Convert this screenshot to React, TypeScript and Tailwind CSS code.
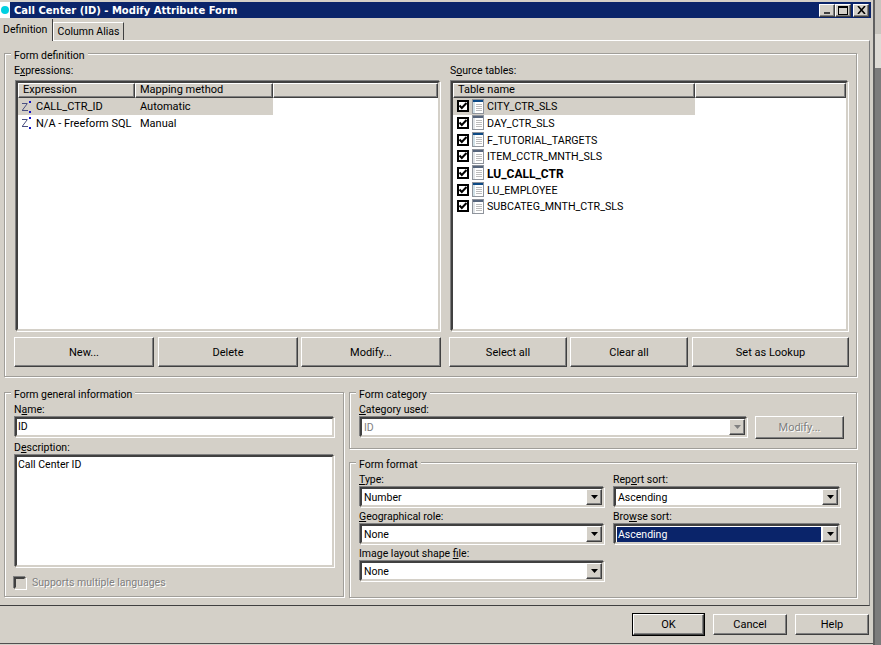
import { ReactNode } from 'react'

const raised = 'border border-t-white border-l-white border-r-[#404040] border-b-[#404040] shadow-[inset_-1px_-1px_0_#808080]'
const sunken = 'border-2 border-t-[#404040] border-l-[#404040] border-r-[#d4d0c8] border-b-[#d4d0c8] shadow-[-1px_-1px_0_#808080,1px_1px_0_#fff]'

function Group({ title, className, children }: { title: string; className: string; children: ReactNode }) {
  return (
    <div className={`relative border border-[#a09e99] shadow-[inset_1px_1px_0_#fff,1px_1px_0_#fff] ${className}`}>
      <span className="absolute -top-[5px] left-[6px] bg-[#d4d0c8] px-[3px] leading-[14px]">{title}</span>
      {children}
    </div>
  )
}

function Button({ label, className, disabled }: { label: string; className: string; disabled?: boolean }) {
  return (
    <div className={`flex items-center justify-center pt-[2px] text-[11px] ${raised} ${disabled ? 'text-[#808080] [text-shadow:1px_1px_0_#fff]' : ''} ${className}`}>
      {label}
    </div>
  )
}

function Arrow({ disabled }: { disabled?: boolean }) {
  return (
    <div className={`flex h-[16px] w-[16px] shrink-0 items-center justify-center bg-[#d4d0c8] ${raised}`}>
      <svg width="7" height="4" viewBox="0 0 7 4">
        <path d="M0 0h7L3.5 4z" fill={disabled ? '#808080' : '#000'} />
      </svg>
    </div>
  )
}

function Combo({ value, className, selected, disabled }: { value: string; className: string; selected?: boolean; disabled?: boolean }) {
  return (
    <div className={`flex h-[20px] items-center bg-white ${sunken} ${className}`}>
      <div className={`mx-[1px] flex h-[15px] flex-1 items-center pl-[1px] pt-[2px] ${selected ? 'bg-[#0a246a] text-white' : ''} ${disabled ? 'text-[#808080]' : ''}`}>
        {value}
      </div>
      <Arrow disabled={disabled} />
    </div>
  )
}

function Sigma() {
  return (
    <svg width="11" height="13" viewBox="0 0 11 13" className="shrink-0">
      <path d="M1 3.5h5.5M6 4L1.5 10M1 10.5h6" fill="none" stroke="#4a5080" strokeWidth="1" />
      <path d="M8 1h2v2H8zM8 11h2v2H8z" fill="#1414c8" />
    </svg>
  )
}

function TableIcon({ blue }: { blue?: boolean }) {
  return (
    <svg width="12" height="15" viewBox="0 0 12 15" className="shrink-0">
      <rect x="0.5" y="0.5" width="11" height="14" fill="#fff" stroke="#8f949c" />
      <path d="M1 1h10v2H1z" fill={blue ? '#0c4a86' : '#56657c'} />
      <path d="M1 3h2v11H1z" fill={blue ? '#cfe0e6' : '#dfe3e6'} />
      <path d="M4 5.5h6M4 7.5h6M4 9.5h6M4 11.5h6" stroke="#bcbcbc" />
    </svg>
  )
}

function Check() {
  return (
    <div className="flex h-[12px] w-[12px] shrink-0 items-center justify-center border-2 border-black bg-white">
      <svg width="8" height="8" viewBox="0 0 8 8">
        <path d="M0.5 3.5l2.3 2.5L7.5 1" fill="none" stroke="#000" strokeWidth="2" />
      </svg>
    </div>
  )
}

function HeaderCell({ label, className }: { label: string; className: string }) {
  return <div className={`flex h-[15px] shrink-0 items-center pl-[4px] ${raised} ${className}`}>{label}</div>
}

const tables = [
  { name: 'CITY_CTR_SLS', sel: true, blue: true },
  { name: 'DAY_CTR_SLS' },
  { name: 'F_TUTORIAL_TARGETS', blue: true },
  { name: 'ITEM_CCTR_MNTH_SLS' },
  { name: 'LU_CALL_CTR', bold: true },
  { name: 'LU_EMPLOYEE', blue: true },
  { name: 'SUBCATEG_MNTH_CTR_SLS' },
]

export default function App() {
  return (
    <div className="flex h-[645px] w-[881px] overflow-hidden bg-[#d4d0c8] font-['Roboto',sans-serif] text-[10.5px] text-black">
      <div className="flex w-[873px] shrink-0 flex-col pt-[2px]">
        {/* title bar */}
        <div className="mr-[2px] flex h-[16px] shrink-0 items-center bg-[#0a246a] pr-[2px]">
          <div className="flex h-[16px] w-[10px] shrink-0 items-center justify-center bg-white">
            <div className="h-[8px] w-[8px] rounded-full bg-[#00d0e0]" />
          </div>
          <span className="ml-[4px] font-['DejaVu_Sans',sans-serif] text-[10px] font-bold text-white">Call Center (ID) - Modify Attribute Form</span>
          <div className="ml-auto flex items-center">
            <div className={`flex h-[13px] w-[16px] items-end justify-center bg-[#d4d0c8] pb-[2px] ${raised}`}>
              <div className="h-[2px] w-[6px] bg-[#404040]" />
            </div>
            <div className={`flex h-[13px] w-[16px] items-center justify-center bg-[#d4d0c8] ${raised}`}>
              <div className="h-[9px] w-[10px] border border-t-2 border-black" />
            </div>
            <div className={`ml-[2px] flex h-[13px] w-[16px] items-center justify-center bg-[#d4d0c8] ${raised}`}>
              <svg width="9" height="8" viewBox="0 0 9 8">
                <path d="M1 0l7 8M8 0L1 8" stroke="#000" strokeWidth="1.6" />
              </svg>
            </div>
          </div>
        </div>

        {/* tabs */}
        <div className="flex h-[22px] shrink-0 items-end">
          <div className="z-10 -mb-[1px] flex h-[22px] w-[53px] items-center border-r border-r-[#404040] bg-[#d4d0c8] pl-[3px]">Definition</div>
          <div className="flex h-[18px] w-[71px] items-center justify-center border border-b-0 border-t-white border-l-white border-r-[#404040] pt-[1px]">Column Alias</div>
        </div>

        {/* tab panel */}
        <div className="flex h-[566px] w-[870px] shrink-0 flex-col border-t border-r border-b border-t-white border-r-[#808080] border-b-[#404040] pl-[4px] pt-[12px]">
          <Group title="Form definition" className="h-[324px] w-[853px] shrink-0 pl-[9px] pt-[9px]">
            <div className="flex gap-[8px]">
              <div className="w-[428px]">
                <div className="h-[18px] leading-[16px]">E<span className="underline">x</span>pressions:</div>
                <div className={`ml-[2px] h-[250px] w-[424px] bg-white ${sunken}`}>
                  <div className="flex bg-[#d4d0c8] text-[11px]">
                    <HeaderCell label="Expression" className="w-[117px]" />
                    <HeaderCell label="Mapping method" className="w-[138px]" />
                    <HeaderCell label="" className="flex-1" />
                  </div>
                  <div className="flex h-[16.5px] w-[255px] items-center bg-[#d4d0c8] pl-[3px] text-[11px]">
                    <Sigma />
                    <span className="ml-[4px] w-[104px] pt-[2px]">CALL_CTR_ID</span>
                    <span className="pt-[2px]">Automatic</span>
                  </div>
                  <div className="flex h-[16.5px] w-[255px] items-center pl-[3px] text-[11px]">
                    <Sigma />
                    <span className="ml-[4px] w-[104px] whitespace-nowrap pt-[2px]">N/A - Freeform SQL</span>
                    <span className="pt-[2px]">Manual</span>
                  </div>
                </div>
              </div>
              <div className="w-[400px]">
                <div className="h-[18px] leading-[16px]">S<span className="underline">o</span>urce tables:</div>
                <div className={`ml-[1px] h-[250px] w-[397px] bg-white ${sunken}`}>
                  <div className="flex bg-[#d4d0c8] text-[11px]">
                    <HeaderCell label="Table name" className="w-[242px]" />
                    <HeaderCell label="" className="flex-1" />
                  </div>
                  {tables.map((t) => (
                    <div key={t.name} className={`flex h-[16.67px] w-[242px] items-center pl-[4px] ${t.sel ? 'bg-[#d4d0c8]' : ''}`}>
                      <Check />
                      <div className="ml-[3px]">
                        <TableIcon blue={t.blue} />
                      </div>
                      <span className={`ml-[3px] pt-[2px] ${t.bold ? 'text-[12px] font-bold' : 'text-[10.7px]'}`}>{t.name}</span>
                    </div>
                  ))}
                </div>
              </div>
            </div>
            <div className="mt-[6px] flex">
              <Button label="New..." className="h-[30px] w-[140px]" />
              <Button label="Delete" className="ml-[4px] h-[30px] w-[140px]" />
              <Button label="Modify..." className="ml-[3px] h-[30px] w-[140px]" />
              <Button label="Select all" className="ml-[8px] h-[30px] w-[118px]" />
              <Button label="Clear all" className="ml-[3px] h-[30px] w-[118px]" />
              <Button label="Set as Lookup" className="ml-[4px] h-[30px] w-[157px]" />
            </div>
          </Group>

          <div className="mt-[15px] flex">
            <Group title="Form general information" className="h-[205px] w-[340px] shrink-0 pl-[9px] pt-[9px]">
              <div className="h-[15px] leading-[16px]">N<span className="underline">a</span>me:</div>
              <div className={`ml-[1px] flex h-[20px] w-[319px] items-center bg-white pl-[1px] ${sunken}`}>ID</div>
              <div className="mt-[3px] h-[15px] leading-[16px]">D<span className="underline">e</span>scription:</div>
              <div className={`ml-[1px] h-[112px] w-[319px] bg-white pl-[1px] leading-[16px] ${sunken}`}>Call Center ID</div>
              <div className="mt-[8px] flex items-center">
                <div className={`h-[12px] w-[12px] ${sunken}`} />
                <span className="ml-[6px] text-[#808080] [text-shadow:1px_1px_0_#fff]">Supports multiple languages</span>
              </div>
            </Group>
            <div className="ml-[5px] flex flex-col">
              <Group title="Form category" className="h-[57px] w-[508px] shrink-0 pl-[9px] pt-[9px]">
                <div className="h-[15px] leading-[16px]"><span className="underline">C</span>ategory used:</div>
                <div className="flex items-start">
                  <Combo value="ID" disabled className="ml-[1px] w-[387px]" />
                  <Button label="Modify..." disabled className="ml-[8px] -mt-[1px] h-[23px] w-[89px]" />
                </div>
              </Group>
              <Group title="Form format" className="mt-[13px] h-[136px] w-[508px] shrink-0 pl-[9px] pt-[9px]">
                <div className="flex">
                  <div className="w-[254px]">
                    <div className="h-[15px] leading-[16px]"><span className="underline">T</span>ype:</div>
                    <Combo value="Number" className="ml-[1px] w-[244px]" />
                    <div className="mt-[2px] h-[15px] leading-[16px]"><span className="underline">G</span>eographical role:</div>
                    <Combo value="None" className="ml-[1px] w-[244px]" />
                    <div className="mt-[2px] h-[15px] leading-[16px]">Image layout shape <span className="underline">f</span>ile:</div>
                    <Combo value="None" className="ml-[1px] w-[244px]" />
                  </div>
                  <div className="w-[228px]">
                    <div className="h-[15px] leading-[16px]">Rep<span className="underline">o</span>rt sort:</div>
                    <Combo value="Ascending" className="ml-[1px] w-[226px]" />
                    <div className="mt-[2px] h-[15px] leading-[16px]">Bro<span className="underline">w</span>se sort:</div>
                    <Combo value="Ascending" selected className="ml-[1px] w-[226px]" />
                  </div>
                </div>
              </Group>
            </div>
          </div>
        </div>

        {/* dialog buttons */}
        <div className="mb-[1px] flex flex-1 justify-end border-b border-b-[#505050] pr-[4px] pt-[8px]">
          <Button label="OK" className="h-[21px] w-[71px] outline outline-black" />
          <Button label="Cancel" className="ml-[9px] h-[21px] w-[74px]" />
          <Button label="Help" className="ml-[8px] h-[21px] w-[74px]" />
        </div>
      </div>
      <div className="flex w-[8px] shrink-0 flex-col border-l-2 border-l-[#606060]">
        <div className="h-[68px] border-t-[34px] border-t-[#c8c5be] bg-[#dedbd5]" />
        <div className="flex-1 bg-[#7c7c7c]" />
      </div>
    </div>
  )
}
